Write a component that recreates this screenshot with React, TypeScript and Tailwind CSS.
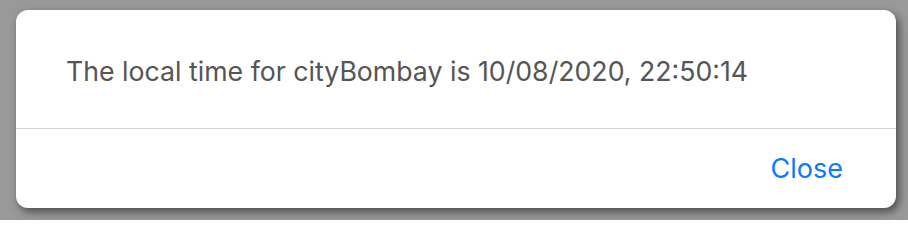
import React from 'react';

export default function App() {
    return (
        <div className="w-[908px] h-[220px] bg-[#999999] pt-[10px] pl-[16px]" style={{ fontFamily: 'Inter, "Liberation Sans", sans-serif' }}>
            <div className="w-[880px] h-[198px] bg-white rounded-[12px] shadow-[3px_4px_9px_rgba(0,0,0,0.5)] flex flex-col overflow-hidden">
                <div className="h-[119px] flex items-center pl-[50px] pt-[5px] border-b border-[#d6d6d6]">
                    <p className="text-[26.7px] text-[#555555]">The local time for cityBombay is 10/08/2020, 22:50:14</p>
                </div>
                <div className="flex-1 flex items-center justify-end pr-[53px] pt-[2px]">
                    <button className="text-[27px] text-[#0a7aff]">Close</button>
                </div>
            </div>
        </div>
    );
}
